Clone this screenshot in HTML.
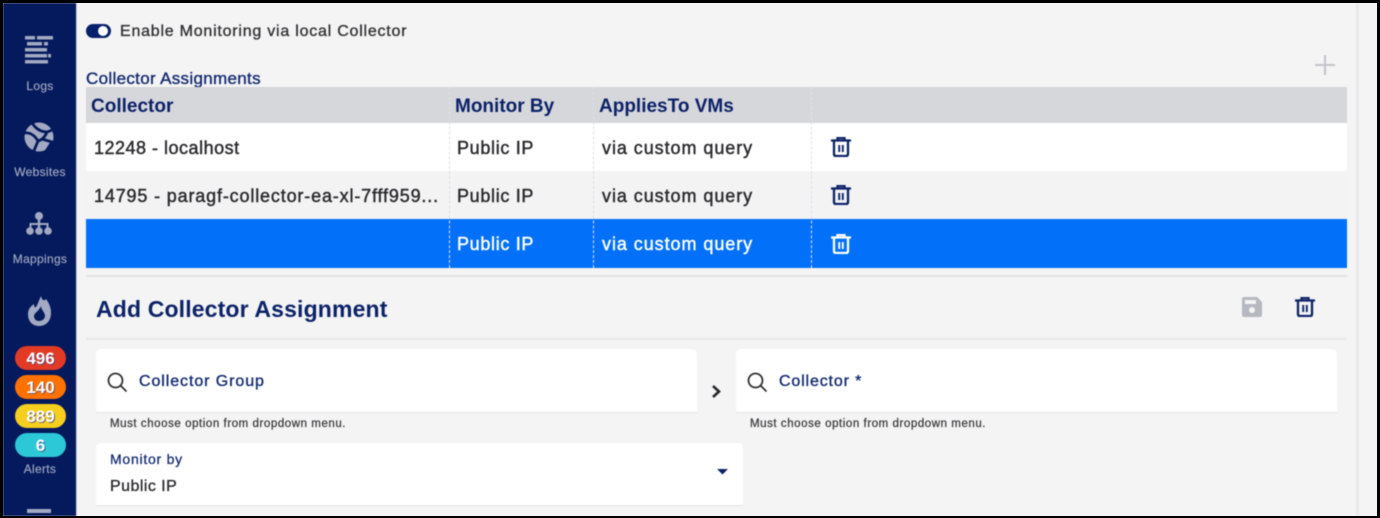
<!DOCTYPE html>
<html>
<head>
<meta charset="utf-8">
<style>
html,body{margin:0;padding:0;background:#000;}
#f{position:relative;width:1380px;height:518px;overflow:hidden;background:#000;font-family:"Liberation Sans",sans-serif;}
#m{position:absolute;left:3px;top:3px;width:1374px;height:513px;background:#f4f4f4;overflow:hidden;}
#c{position:absolute;left:-3px;top:-3px;width:1380px;height:518px;filter:blur(.45px);}
.a{position:absolute;white-space:nowrap;}
.t{font-size:18px;line-height:22px;color:#2b2b2e;-webkit-text-stroke:.45px #2b2b2e;}
.ip{letter-spacing:.67px;}
.q{letter-spacing:.94px;}
.h{font-size:19px;line-height:24px;color:#0c2268;font-weight:bold;}
.w{color:#fff;-webkit-text-stroke:.45px #fff;}
.l{font-size:12px;line-height:14px;color:#a3a9c2;text-align:center;width:74px;left:3px;letter-spacing:.3px;-webkit-text-stroke:.15px #a3a9c2;}
.b{position:absolute;left:15px;width:51px;height:24px;border-radius:12px;color:#fff;font-size:17px;line-height:25px;text-align:center;font-weight:bold;text-shadow:1px 1px 0 rgba(60,60,130,.7);}
.box{position:absolute;background:#fff;border-radius:5px 5px 0 0;border-bottom:1px solid #e3e3ea;}
.n{font-size:11.5px;line-height:14px;color:#3a3a3d;letter-spacing:.56px;-webkit-text-stroke:.25px #3a3a3d;}
.v{position:absolute;top:87px;width:0;height:181px;border-left:1.5px dashed #dfe0e4;}
</style>
</head>
<body>
<div id="f">
<div id="m">
<div id="c">
<div class="a" style="left:3px;top:3px;width:73px;height:513px;background:#041a5c;"></div>
<div class="a" style="left:76px;top:3px;width:1px;height:513px;background:#cfd2dc;"></div>
<div class="a" style="left:1356px;top:3px;width:3px;height:513px;background:#e9e9ed;"></div>

<!-- Logs icon -->
<svg class="a" style="left:24px;top:34px" width="30" height="32" viewBox="0 0 30 32" fill="#a3a9c2"><rect x="1" y="2" width="10" height="3.500"/><rect x="13" y="2" width="16" height="3.500"/><rect x="3" y="8" width="15" height="3.500"/><rect x="20" y="8" width="4" height="3.500"/><rect x="1" y="14" width="22" height="3.500"/><rect x="1" y="20" width="22" height="3.500"/><rect x="24" y="20" width="3" height="3.500"/><rect x="1" y="26" width="23" height="3.500"/></svg>
<div class="a l" style="top:79px;">Logs</div>

<!-- Websites icon -->
<svg class="a" style="left:23px;top:121px" width="32" height="32" viewBox="0 0 32 32"><circle cx="16" cy="16" r="14.500" fill="#a3a9c2"/><path d="M1 12C8 11 12 15 15 20L10 32M9 2C13 8 18 11 24 11L32 8M15 20C19 19 22 16 24 11M19 18L29 21L22 32" fill="none" stroke="#041a5c" stroke-width="2.800"/></svg>
<div class="a l" style="top:165px;">Websites</div>

<!-- Mappings icon -->
<svg class="a" style="left:26px;top:211px" width="26" height="26" viewBox="0 0 26 26" fill="#a3a9c2"><circle cx="13" cy="5" r="4"/><circle cx="4" cy="20" r="3.800"/><circle cx="13" cy="20" r="3.800"/><circle cx="22" cy="20" r="3.800"/><path d="M11.800 8h2.400v4h8.300v5h-2v-3h-6.300v3h-2.400v-3H5.500v3h-2v-5h8.300z"/></svg>
<div class="a l" style="top:252px;">Mappings</div>

<!-- Flame -->
<svg class="a" style="left:26px;top:295px" width="26" height="32" viewBox="0 0 26 32"><path d="M15 1C16 6 19 6 20 4C23 8 25 12 25 18C25 26 20 31 13 31C6 31 2 26 2 19C2 14 5 11 8 9C8 12 9 13 10 12C12 9 13 5 15 1Z" fill="#a3a9c2"/><path d="M15 11C15 15 19 17 19 21C19 24 16 26 13 26C10 26 8 24 8 21C8 18 13 16 15 11Z" fill="#041a5c"/></svg>

<div class="b" style="top:346px;background:#e23a24;">496</div>
<div class="b" style="top:375px;background:#ff7200;">140</div>
<div class="b" style="top:404px;background:#f6cf1e;">889</div>
<div class="b" style="top:433px;background:#2cc8d8;">6</div>
<div class="a l" style="top:462px;">Alerts</div>
<div class="a" style="left:27px;top:509px;width:24px;height:4px;background:#a3a9c2;"></div>

<!-- Toggle -->
<div class="a" style="left:86px;top:24px;width:25px;height:14px;border-radius:7px;background:#041f6b;"></div>
<div class="a" style="left:98px;top:26px;width:10px;height:10px;border-radius:5px;background:#fff;"></div>
<div class="a" style="left:120px;top:22px;font-size:16px;line-height:20px;color:#333336;letter-spacing:.77px;-webkit-text-stroke:.35px #333336;">Enable Monitoring via local Collector</div>

<div class="a" style="left:86px;top:69px;font-size:17px;line-height:19px;color:#12296f;letter-spacing:.32px;-webkit-text-stroke:.35px #12296f;">Collector Assignments</div>

<!-- plus -->
<svg class="a" style="left:1314px;top:54px" width="22" height="22" viewBox="0 0 22 22"><path d="M11 1V21M1 11H21" stroke="#c2c4cb" stroke-width="2"/></svg>

<!-- Table -->
<div class="a" style="left:86px;top:87px;width:1261px;height:36px;background:#d6d7db;"></div>
<div class="a" style="left:86px;top:123px;width:1261px;height:48px;background:#fff;"></div>
<div class="a" style="left:86px;top:171px;width:1261px;height:48px;background:#f3f3f4;"></div>
<div class="a" style="left:86px;top:219px;width:1261px;height:49px;background:#0270f8;"></div>
<div class="v" style="left:449px;"></div>
<div class="v" style="left:593px;"></div>
<div class="v" style="left:811px;"></div>

<div class="a h" style="left:91px;top:95px;">Collector</div>
<div class="a h" style="left:455px;top:95px;">Monitor By</div>
<div class="a h" style="left:599px;top:95px;">AppliesTo VMs</div>

<div class="a t" style="left:94px;top:137px;letter-spacing:.5px;">12248 - localhost</div>
<div class="a t ip" style="left:457px;top:137px;">Public IP</div>
<div class="a t q" style="left:602px;top:137px;">via custom query</div>

<div class="a t" style="left:94px;top:185px;letter-spacing:.84px;">14795 - paragf-collector-ea-xl-7fff959...</div>
<div class="a t ip" style="left:457px;top:185px;">Public IP</div>
<div class="a t q" style="left:602px;top:185px;">via custom query</div>

<div class="a t w ip" style="left:457px;top:233px;">Public IP</div>
<div class="a t w q" style="left:602px;top:233px;">via custom query</div>

<svg class="a" style="left:831px;top:137px" width="20" height="20" viewBox="0 0 20 20" fill="none" stroke="#0c2268" stroke-width="2.300"><path d="M0 3.500H20" /><path d="M6.500 2.500V1H13.500V2.500"/><path d="M3 4V17Q3 19 5 19H15Q17 19 17 17V4"/><path d="M8.200 8V15M11.800 8V15" stroke-width="1.900"/></svg>
<svg class="a" style="left:831px;top:185px" width="20" height="20" viewBox="0 0 20 20" fill="none" stroke="#0c2268" stroke-width="2.300"><path d="M0 3.500H20" /><path d="M6.500 2.500V1H13.500V2.500"/><path d="M3 4V17Q3 19 5 19H15Q17 19 17 17V4"/><path d="M8.200 8V15M11.800 8V15" stroke-width="1.900"/></svg>
<svg class="a" style="left:831px;top:234px" width="20" height="20" viewBox="0 0 20 20" fill="none" stroke="#fff" stroke-width="2.300"><path d="M0 3.500H20" /><path d="M6.500 2.500V1H13.500V2.500"/><path d="M3 4V17Q3 19 5 19H15Q17 19 17 17V4"/><path d="M8.200 8V15M11.800 8V15" stroke-width="1.900"/></svg>

<div class="a" style="left:86px;top:275px;width:1261px;height:2px;background:#e4e4e6;"></div>
<div class="a" style="left:96px;top:295px;font-size:23px;line-height:28px;font-weight:bold;color:#0c2268;letter-spacing:.15px;">Add Collector Assignment</div>

<!-- save -->
<svg class="a" style="left:1242px;top:297px" width="20" height="20" viewBox="0 0 20 20"><path d="M2 0H15L20 5V18Q20 20 18 20H2Q0 20 0 18V2Q0 0 2 0Z" fill="#b6b8c0"/><rect x="3" y="3" width="11" height="4" fill="#f4f4f4"/><circle cx="10" cy="13" r="3" fill="#f4f4f4"/></svg>
<svg class="a" style="left:1295px;top:297px" width="20" height="20" viewBox="0 0 20 20" fill="none" stroke="#0c2268" stroke-width="2.300"><path d="M0 3.500H20" /><path d="M6.500 2.500V1H13.500V2.500"/><path d="M3 4V17Q3 19 5 19H15Q17 19 17 17V4"/><path d="M8.200 8V15M11.800 8V15" stroke-width="1.900"/></svg>

<div class="a" style="left:86px;top:338px;width:1261px;height:2px;background:#e8e8ea;"></div>

<!-- Inputs -->
<div class="box" style="left:96px;top:349px;width:601px;height:63px;"></div>
<svg class="a" style="left:107px;top:372px" width="21" height="21" viewBox="0 0 21 21" fill="none" stroke="#333336" stroke-width="1.800"><circle cx="8.500" cy="8.500" r="7"/><path d="M13.500 13.500L19.500 19.500"/></svg>
<div class="a" style="left:139px;top:372px;font-size:16px;line-height:20px;color:#12296f;letter-spacing:.92px;-webkit-text-stroke:.35px #12296f;">Collector Group</div>
<div class="a n" style="left:110px;top:417px;">Must choose option from dropdown menu.</div>

<svg class="a" style="left:711px;top:384px" width="11" height="15" viewBox="0 0 11 15" fill="none" stroke="#27272a" stroke-width="2.600"><path d="M2 2L8 7.500L2 13"/></svg>

<div class="box" style="left:736px;top:349px;width:601px;height:63px;"></div>
<svg class="a" style="left:747px;top:372px" width="21" height="21" viewBox="0 0 21 21" fill="none" stroke="#333336" stroke-width="1.800"><circle cx="8.500" cy="8.500" r="7"/><path d="M13.500 13.500L19.500 19.500"/></svg>
<div class="a" style="left:779px;top:372px;font-size:16px;line-height:20px;color:#12296f;letter-spacing:.85px;-webkit-text-stroke:.35px #12296f;">Collector *</div>
<div class="a n" style="left:750px;top:417px;">Must choose option from dropdown menu.</div>

<div class="box" style="left:96px;top:443px;width:647px;height:62px;"></div>
<div class="a" style="left:110px;top:451px;font-size:14px;line-height:16px;color:#12296f;letter-spacing:.75px;-webkit-text-stroke:.25px #12296f;">Monitor by</div>
<div class="a" style="left:110px;top:477px;font-size:16px;line-height:20px;color:#2b2b2e;letter-spacing:.45px;-webkit-text-stroke:.35px #2b2b2e;">Public IP</div>
<svg class="a" style="left:717px;top:468px" width="11" height="7" viewBox="0 0 11 7"><path d="M0 1H11L5.500 6.500Z" fill="#0c2268"/></svg>
</div>
</div>
</div>
</body>
</html>
